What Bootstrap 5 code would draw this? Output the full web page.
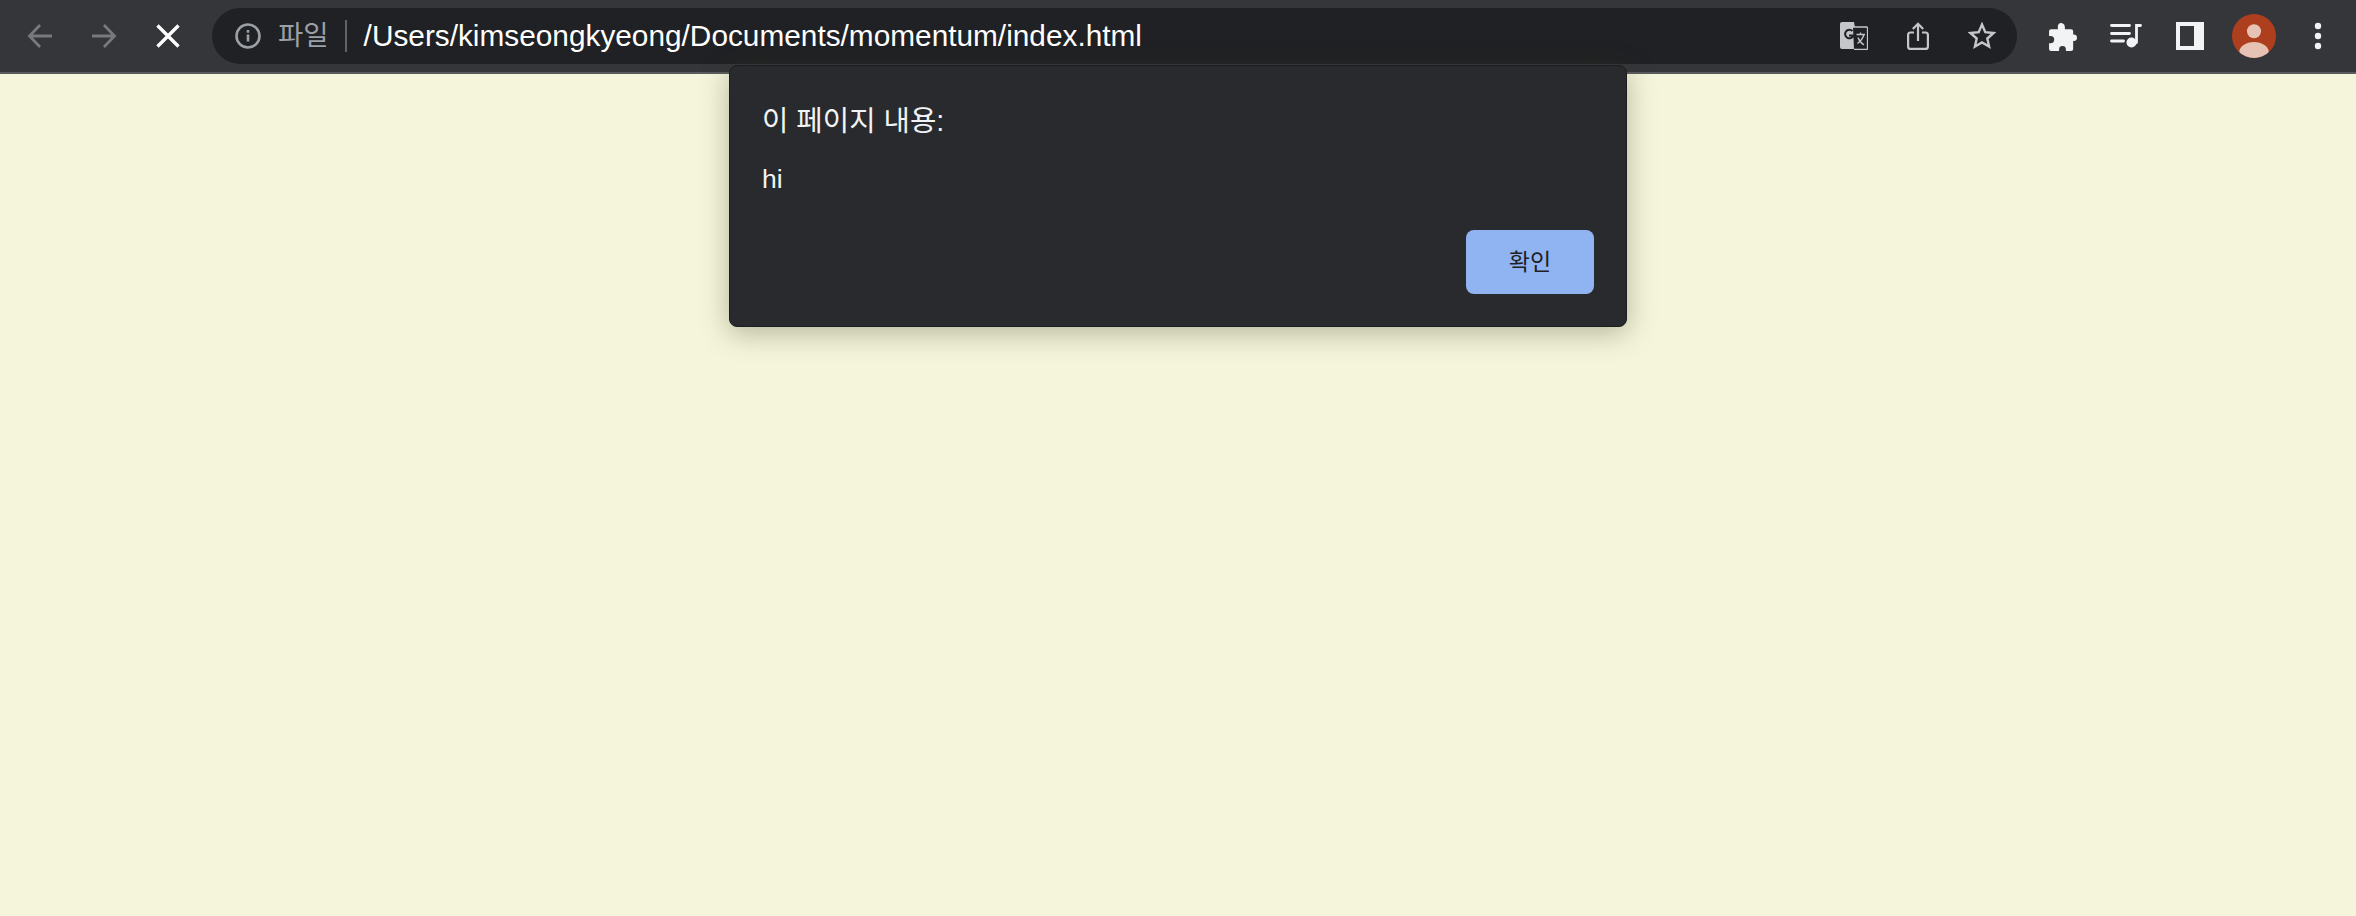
<!DOCTYPE html>
<html lang="ko">
<head>
  <meta charset="UTF-8">
  <title>momentum</title>
  <link href="https://cdn.jsdelivr.net/npm/bootstrap@5.3.0/dist/css/bootstrap.min.css" rel="stylesheet">
  <style>
    html, body { height: 100%; }
    body { background: #f5f5dc; font-family: "Liberation Sans", "Noto Sans CJK KR", sans-serif; overflow: hidden; }
    .chrome-bar { height: 74px; background: #35363a; border-bottom: 2px solid #5a5b5e; padding-left: 27px; }
    .nav-ico { width: 26px; height: 26px; flex: none; margin-right: 38px; }
    .nav-stop { margin-right: 31px; }
    .omni { height: 56px; width: 1805px; flex: none; background: #202124; border-radius: 28px; padding-left: 22px; padding-right: 21px; }
    .omni-file { color: #9aa0a6; font-size: 27.500px; margin-left: 16px; line-height: 1; }
    .omni-sep { width: 2px; height: 32px; background: #5f6368; margin-left: 16px; margin-right: 17px; }
    .omni-url { color: #fff; font-size: 29.800px; line-height: 1; white-space: nowrap; }
    .omni-tools { gap: 39px; }
    .ext-puzzle { margin-left: 31px; }
    .ext-music { margin-left: 33px; }
    .ext-side { margin-left: 34px; }
    .ext-avatar { margin-left: 28px; width: 44px; height: 44px; flex: none; }
    .ext-dots { margin-left: 38px; }
    .alert-box { position: absolute; left: 729px; top: 65px; width: 898px; height: 262px; background: #292a2d; border: 1px solid #1c1d1f; border-radius: 8px; box-shadow: 0 6px 28px rgba(60, 60, 30, .35); padding: 0 32px 0 32px; }
    .alert-title { font-size: 28.700px; line-height: 32px; padding-top: 39px; color: #f1f3f4; }
    .alert-msg { font-size: 26.500px; line-height: 30px; margin-top: 27px; color: #f1f3f4; }
    .alert-ok { position: absolute; right: 32px; bottom: 32px; width: 128px; height: 64px; background: #90b4f2; color: #202124; border: 0; border-radius: 8px; font-size: 23px; padding: 0; }
  </style>
</head>
<body>
  <div class="chrome-bar d-flex align-items-center">
    <svg class="nav-ico" viewBox="0 0 26 26" fill="none" stroke="#77797d" stroke-width="2.800"><path d="M25 13H2.500M13 2 2.500 13 13 24"/></svg>
    <svg class="nav-ico" viewBox="0 0 26 26" fill="none" stroke="#77797d" stroke-width="2.800"><path d="M1 13h22.500M13 2l10.500 11L13 24"/></svg>
    <svg class="nav-ico nav-stop" viewBox="0 0 26 26" fill="none" stroke="#fff" stroke-width="3.400"><path d="M2.500 2.500l21 21M23.500 2.500l-21 21"/></svg>
    <div class="omni d-flex align-items-center">
      <svg width="28" height="28" viewBox="0 0 28 28" fill="none" stroke="#9aa0a6" stroke-width="2.600"><circle cx="14" cy="14" r="11.500"/><path d="M14 12.500v7M14 8v2.800"/></svg>
      <span class="omni-file">파일</span>
      <span class="omni-sep"></span>
      <span class="omni-url">/Users/kimseongkyeong/Documents/momentum/index.html</span>
      <div class="omni-tools d-flex align-items-center ms-auto">
        <svg width="28" height="28" viewBox="0 0 28 28"><path d="M2 0h12l5 27H2a2 2 0 0 1-2-2V2a2 2 0 0 1 2-2z" fill="#c4c6c9"/><path d="M13 5h13.500A1 1 0 0 1 27.500 6v20.500a1 1 0 0 1-1 1H14" fill="#202124" stroke="#c4c6c9" stroke-width="1.300"/><path d="M12.500 9a4.300 4.300 0 1 0 1 4.500H9" fill="none" stroke="#202124" stroke-width="2"/><path d="M16.500 12.500h8.500M20.500 10.500v2M24 12.500c-1 4-4 7-6.500 9M18 15.500c1 3 3 5.500 6 7.500" fill="none" stroke="#c4c6c9" stroke-width="1.300"/></svg>
        <svg width="22" height="29" viewBox="0 0 22 29" fill="none" stroke="#c4c6c9" stroke-width="2.200"><path d="M7 10.500H3.500a2.400 2.400 0 0 0-2.400 2.400v11.700a2.400 2.400 0 0 0 2.400 2.300h15a2.400 2.400 0 0 0 2.400-2.300V12.900a2.400 2.400 0 0 0-2.400-2.400H15M11 19V2M5.800 7 11 1.800 16.200 7"/></svg>
        <svg width="28" height="28" viewBox="0 0 28 28" fill="none" stroke="#c4c6c9" stroke-width="2.400"><path d="M14 2.500l3.300 7.700 8.200.8-6.200 5.500 1.800 8.100-7.100-4.200-7.100 4.200 1.800-8.100L2.500 11l8.200-.8z"/></svg>
      </div>
    </div>
    <svg class="ext-puzzle" width="29" height="29" viewBox="0 0 28 28" fill="#f1f3f4"><path d="M10 2.500a3.500 3.500 0 0 1 6.300 2V7h6a2 2 0 0 1 2 2v3h.500a3.200 3.200 0 0 1 0 6.400h-.500V26a2 2 0 0 1-2 2h-5v-1.500a3.300 3.300 0 0 0-6.600 0V28H3a2 2 0 0 1-2-2v-5.500h1.500a3.500 3.500 0 0 0 0-7H1V9a2 2 0 0 1 2-2h6.500V4.500c0-.7.100-1.400.5-2z"/></svg>
    <svg class="ext-music" width="32" height="24" viewBox="0 0 32 24" fill="none" stroke="#f1f3f4" stroke-width="2.800" stroke-linecap="round"><path d="M1.500 1.500h18M1.500 9.500h18M1.500 17h12M26.500 18.500V1.500h4"/><circle cx="21.500" cy="18.500" r="5" fill="#f1f3f4" stroke="none"/></svg>
    <svg class="ext-side" width="28" height="28" viewBox="0 0 28 28"><path d="M0 0h28v28H0z" fill="#f1f3f4"/><path d="M4 4h14v20H4z" fill="#35363a"/></svg>
    <svg class="ext-avatar" viewBox="0 0 44 44"><defs><clipPath id="av"><circle cx="22" cy="22" r="22"/></clipPath></defs><circle cx="22" cy="22" r="22" fill="#ae3f1e"/><g fill="#e6c3b5" clip-path="url(#av)"><circle cx="22" cy="17.300" r="7"/><ellipse cx="22" cy="38" rx="14.700" ry="10"/></g></svg>
    <svg class="ext-dots" width="8" height="28" viewBox="0 0 8 28" fill="#f1f3f4"><circle cx="4" cy="4" r="3.200"/><circle cx="4" cy="14" r="3.200"/><circle cx="4" cy="24" r="3.200"/></svg>
  </div>

  <div class="alert-box">
    <div class="alert-title">이 페이지 내용:</div>
    <div class="alert-msg">hi</div>
    <button class="alert-ok btn" type="button">확인</button>
  </div>
</body>
</html>
